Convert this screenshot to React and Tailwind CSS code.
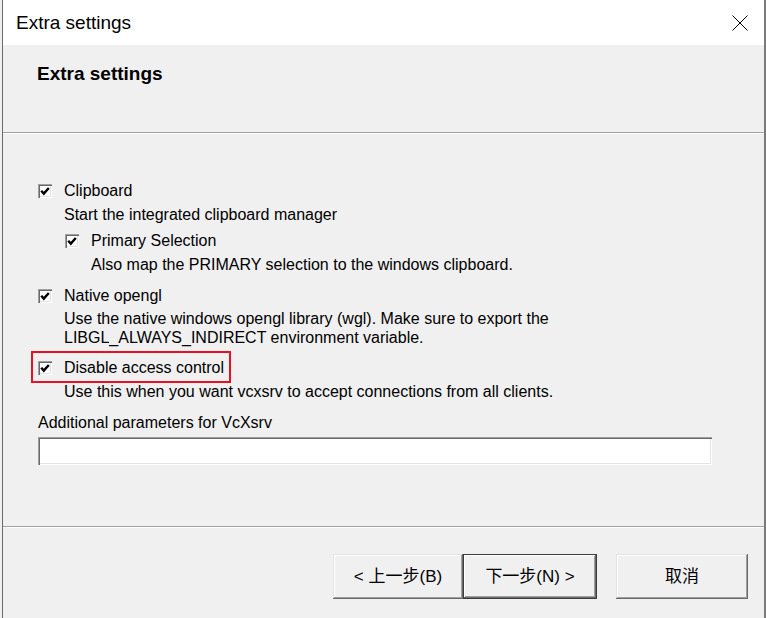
const ui = "font-['Liberation_Sans','Noto_Sans_CJK_SC',sans-serif]";

const Check = ({ checked = true }) => (
  <span className="w-[14px] h-[14px] shrink-0 bg-white shadow-[inset_1px_1px_0_#a0a0a0,inset_2px_2px_0_#696969,inset_-1px_-1px_0_#ffffff,inset_-2px_-2px_0_#e3e3e3] flex items-center justify-center">
    {checked && (
      <svg width="14" height="14" viewBox="0 0 14 14">
        <polyline points="3.2,6.8 5.8,9.6 10.8,4" fill="none" stroke="#000" strokeWidth="2.4" />
      </svg>
    )}
  </span>
);

// checkbox row with the label
const Option = ({ label, className = "" }) => (
  <div className={"flex items-center gap-[12px] h-[19px] " + className}>
    <Check />
    <span>{label}</span>
  </div>
);

const Btn = ({ children, w, primary }) => (
  <button
    className={
      "h-[45px] text-[17px] text-black bg-[#f0f0f0] flex items-center justify-center " +
      w +
      (primary
        ? " border border-[#3c3c3c] shadow-[inset_-1px_-1px_0_#696969,inset_1px_1px_0_#ffffff,inset_-2px_-2px_0_#a0a0a0]"
        : " shadow-[inset_-1px_-1px_0_#696969,inset_1px_1px_0_#e3e3e3,inset_-2px_-2px_0_#a0a0a0,inset_2px_2px_0_#ffffff]")
    }
  >
    {children}
  </button>
);

export default function App() {
  return (
    <div className={"w-[766px] h-[618px] bg-[#f0f0f0] pl-[2px] flex text-black " + ui}>
      <div className="flex-1 flex flex-col border-l border-l-[#6b6b6b] border-r-2 border-r-[#7a7a7a] overflow-hidden">
        {/* title bar */}
        <div className="h-[45px] bg-white flex items-center justify-between pl-[13px] pr-[15px]">
          <span className="text-[19px] leading-none">Extra settings</span>
          <svg width="16" height="16" viewBox="0 0 16 16" className="mr-[1px]">
            <path d="M0.5 0.5 L15.5 15.5 M15.5 0.5 L0.5 15.5" stroke="#000" strokeWidth="1" />
          </svg>
        </div>

        {/* wizard header */}
        <div className="h-[87px] pl-[34px] pt-[18px]">
          <h1 className="text-[19px] font-bold leading-[22px]">Extra settings</h1>
        </div>
        <div className="border-t border-t-[#a0a0a0] border-b border-b-white" />

        {/* options */}
        <div className="flex-1 pl-[35px] pr-[52px] pt-[47px] text-[16px] leading-[19px]">
          <Option label="Clipboard" />
          <p className="ml-[26px] mt-[5px]">Start the integrated clipboard manager</p>
          <Option label="Primary Selection" className="ml-[27px] mt-[7px]" />
          <p className="ml-[53px] mt-[5px]">Also map the PRIMARY selection to the windows clipboard.</p>

          <Option label="Native opengl" className="mt-[12px]" />
          <p className="ml-[26px] mt-[4px]">
            Use the native windows opengl library (wgl). Make sure to export the
            <br />
            LIBGL_ALWAYS_INDIRECT environment variable.
          </p>

          <div className="relative mt-[11px]">
            <Option label="Disable access control" />
            <div className="absolute left-[-7px] top-[-7px] w-[200px] h-[32px] border-2 border-[#e81123]" />
          </div>
          <p className="ml-[26px] mt-[5px]">Use this when you want vcxsrv to accept connections from all clients.</p>

          <p className="mt-[12px]">Additional parameters for VcXsrv</p>
          <div className="mt-[5px] h-[28px] bg-white shadow-[inset_1px_1px_0_#a0a0a0,inset_2px_2px_0_#696969,inset_-1px_-1px_0_#ffffff,inset_-2px_-2px_0_#e3e3e3]" />
        </div>

        {/* footer */}
        <div className="border-t border-t-[#a0a0a0] border-b border-b-white" />
        <div className="h-[90px] pt-[26px] pr-[16px] flex justify-end items-start">
          <Btn w="w-[130px]">&lt; 上一步(B)</Btn>
          <Btn w="w-[134px]" primary>下一步(N) &gt;</Btn>
          <div className="w-[19px]" />
          <Btn w="w-[132px]">取消</Btn>
        </div>
      </div>
    </div>
  );
}
